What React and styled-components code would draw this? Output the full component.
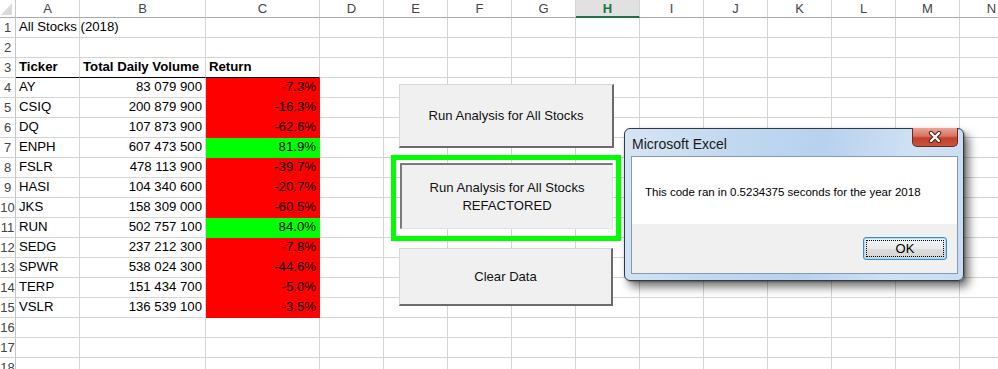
import React from 'react';
import styled, { createGlobalStyle, css } from 'styled-components';

const GlobalStyle = createGlobalStyle`
  html, body {
    margin: 0;
    padding: 0;
    background: #ffffff;
    overflow: hidden;
  }
  * { box-sizing: border-box; }
`;

const COLS = ['A', 'B', 'C', 'D', 'E', 'F', 'G', 'H', 'I', 'J', 'K', 'L', 'M', 'N'];
const WIDTHS = [64, 126, 114, 64, 64, 64, 64, 64, 64, 64, 64, 64, 64, 64];

const stocks = [
  ['AY', '83 079 900', '-7.3%'],
  ['CSIQ', '200 879 900', '-16.3%'],
  ['DQ', '107 873 900', '-62.6%'],
  ['ENPH', '607 473 500', '81.9%'],
  ['FSLR', '478 113 900', '-39.7%'],
  ['HASI', '104 340 600', '-20.7%'],
  ['JKS', '158 309 000', '-60.5%'],
  ['RUN', '502 757 100', '84.0%'],
  ['SEDG', '237 212 300', '-7.8%'],
  ['SPWR', '538 024 300', '-44.6%'],
  ['TERP', '151 434 700', '-5.0%'],
  ['VSLR', '136 539 100', '-3.5%'],
];

const Sheet = styled.div`
  position: relative;
  width: 998px;
  height: 369px;
  overflow: hidden;
  background: #ffffff;
  font-family: 'Liberation Sans', Arial, sans-serif;
`;

const Grid = styled.div`
  display: grid;
  grid-template-columns: 16px ${WIDTHS.map((w) => `${w}px`).join(' ')};
  grid-template-rows: 18px repeat(18, 20px);
`;

const Corner = styled.div`
  position: relative;
  border-right: 1px solid #c6c6c6;
  border-bottom: 1px solid #ababab;
  &::after {
    content: '';
    position: absolute;
    left: 1px;
    top: 3px;
    width: 11px;
    height: 12px;
    background: #dadada;
    clip-path: polygon(100% 0, 100% 100%, 0 100%);
  }
`;

const ColHead = styled.div`
  display: flex;
  align-items: center;
  justify-content: center;
  font-size: 13px;
  color: #444444;
  border-right: 1px solid #d4d4d4;
  border-bottom: 1px solid #ababab;
  ${(p) =>
    p.$active &&
    css`
      background: #e1e1e1;
      color: #217346;
      font-weight: bold;
      border-bottom: 2px solid #217346;
    `}
`;

const RowNum = styled.div`
  display: flex;
  align-items: center;
  justify-content: center;
  overflow: hidden;
  font-size: 13px;
  color: #444444;
  border-right: 1px solid #c6c6c6;
  border-bottom: 1px solid #d4d4d4;
  white-space: nowrap;
`;

const Cell = styled.div`
  display: flex;
  align-items: flex-end;
  justify-content: ${(p) => (p.$right ? 'flex-end' : 'flex-start')};
  padding: 0 3px 2px 3px;
  font-size: 13.2px;
  line-height: 16px;
  color: #000000;
  white-space: nowrap;
  font-weight: ${(p) => (p.$bold ? 'bold' : 'normal')};
  background: ${(p) => p.$fill || 'transparent'};
  border-right: 1px solid ${(p) => p.$fill || '#d4d4d4'};
  border-bottom: 1px solid ${(p) => (p.$underline ? '#000000' : p.$fill || '#d4d4d4')};
`;

const Floating = styled.div`
  position: absolute;
  left: ${(p) => p.$left}px;
  top: ${(p) => p.$top}px;
  width: ${(p) => p.$w}px;
  height: ${(p) => p.$h}px;
`;

const MacroButton = styled.div`
  width: 100%;
  height: 100%;
  display: flex;
  flex-direction: column;
  align-items: center;
  justify-content: center;
  background: #f0f0f0;
  color: #111111;
  font-size: 13.1px;
  line-height: 18px;
  text-align: center;
  border-top: 1px solid #d8d8d8;
  border-left: 1px solid #d8d8d8;
  border-right: 2px solid #6b6b6b;
  border-bottom: 2px solid #6b6b6b;
  ${(p) =>
    p.$pressed &&
    css`
      border-top: 2px solid #7a7a7a;
      border-left: 2px solid #7a7a7a;
      border-right: 1px solid #e4e4e4;
      border-bottom: 1px solid #e4e4e4;
    `}
`;

const SelectFrame = styled.div`
  width: 100%;
  height: 100%;
  border: 5px solid #00ff00;
  padding: 3px 3px 7px 4px;
`;

const Dialog = styled.div`
  position: relative;
  width: 100%;
  height: 100%;
  border: 1px solid #2f3a46;
  border-radius: 6px;
  background: linear-gradient(100deg, #d6e5f5 0%, #c2d8f0 30%, #b7d1ee 55%, #cfe1f4 80%, #c9dcf2 100%);
  box-shadow: 5px 6px 10px rgba(0, 0, 0, 0.55), 1px 1px 2px rgba(0, 0, 0, 0.3);
  padding: 0 5px 6px 6px;
  display: flex;
  flex-direction: column;
`;

const TitleBar = styled.div`
  height: 27px;
  display: flex;
  align-items: center;
  padding: 2px 0 0 1px;
  font-size: 14px;
  color: #1a1a1a;
`;

const CloseButton = styled.div`
  position: absolute;
  top: -1px;
  right: 5px;
  width: 46px;
  height: 19px;
  border: 1px solid #6b2a22;
  border-top: none;
  border-radius: 0 0 5px 5px;
  background: linear-gradient(180deg, #e9a497 0%, #d9735f 45%, #c1412b 55%, #c8533b 100%);
  display: flex;
  align-items: center;
  justify-content: center;
`;

const Panel = styled.div`
  flex: 1;
  border: 1px solid #8799ae;
  background: #f0f0f0;
  display: flex;
  flex-direction: column;
`;

const Message = styled.div`
  height: 67px;
  background: #ffffff;
  display: flex;
  align-items: center;
  padding: 2px 0 0 13px;
  font-size: 11.5px;
  color: #000000;
`;

const ButtonRow = styled.div`
  flex: 1;
  display: flex;
  justify-content: flex-end;
  align-items: flex-start;
  padding: 13px 10px 0 0;
`;

const OkButton = styled.div`
  width: 84px;
  height: 23px;
  border: 1px solid #3c8dc5;
  border-radius: 3px;
  background: linear-gradient(180deg, #f4f4f4 0%, #ebebeb 50%, #dddddd 51%, #d4d4d4 100%);
  padding: 2px;
  box-shadow: inset 0 0 0 1px #a9dbf6;
`;

const OkFocus = styled.div`
  width: 100%;
  height: 100%;
  border: 1px dotted #000000;
  display: flex;
  align-items: center;
  justify-content: center;
  font-size: 13px;
  color: #000000;
`;

const CloseIcon = () => (
  <svg width="14" height="12" viewBox="0 0 14 12">
    <path d="M3 2 L11 10 M11 2 L3 10" stroke="#4a1a14" strokeWidth="4.2" strokeLinecap="round" />
    <path d="M3 2 L11 10 M11 2 L3 10" stroke="#ffffff" strokeWidth="2.4" strokeLinecap="round" />
  </svg>
);

const App = () => {
  const rows = [];
  for (let r = 1; r <= 18; r++) {
    let cells;
    if (r === 1) {
      cells = [<Cell key="a">All Stocks (2018)</Cell>, <Cell key="b" />, <Cell key="c" />];
    } else if (r === 3) {
      cells = [
        <Cell key="a" $bold $underline>Ticker</Cell>,
        <Cell key="b" $bold $underline>Total Daily Volume</Cell>,
        <Cell key="c" $bold $underline>Return</Cell>,
      ];
    } else if (r >= 4 && r <= 15) {
      const [t, v, ret] = stocks[r - 4];
      const fill = ret.startsWith('-') ? '#ff0000' : '#00ff00';
      cells = [
        <Cell key="a">{t}</Cell>,
        <Cell key="b" $right>{v}</Cell>,
        <Cell key="c" $right $fill={fill}>{ret}</Cell>,
      ];
    } else {
      cells = [<Cell key="a" />, <Cell key="b" />, <Cell key="c" />];
    }
    rows.push(
      <React.Fragment key={r}>
        <RowNum>{r}</RowNum>
        {cells}
        {COLS.slice(3).map((c) => (
          <Cell key={c} />
        ))}
      </React.Fragment>
    );
  }

  return (
    <>
      <GlobalStyle />
      <Sheet>
        <Grid>
          <Corner />
          {COLS.map((c) => (
            <ColHead key={c} $active={c === 'H'}>
              {c}
            </ColHead>
          ))}
          {rows}
        </Grid>

        <Floating $left={399} $top={84} $w={215} $h={64}>
          <MacroButton>Run Analysis for All Stocks</MacroButton>
        </Floating>

        <Floating $left={391} $top={155} $w={230} $h={86}>
          <SelectFrame>
            <MacroButton $pressed>
              <span>Run Analysis for All Stocks</span>
              <span>REFACTORED</span>
            </MacroButton>
          </SelectFrame>
        </Floating>

        <Floating $left={399} $top={248} $w={214} $h={58}>
          <MacroButton>Clear Data</MacroButton>
        </Floating>

        <Floating $left={624} $top={128} $w={340} $h={153}>
          <Dialog>
            <TitleBar>Microsoft Excel</TitleBar>
            <CloseButton>
              <CloseIcon />
            </CloseButton>
            <Panel>
              <Message>This code ran in 0.5234375 seconds for the year 2018</Message>
              <ButtonRow>
                <OkButton>
                  <OkFocus>OK</OkFocus>
                </OkButton>
              </ButtonRow>
            </Panel>
          </Dialog>
        </Floating>
      </Sheet>
    </>
  );
};

export default App;
